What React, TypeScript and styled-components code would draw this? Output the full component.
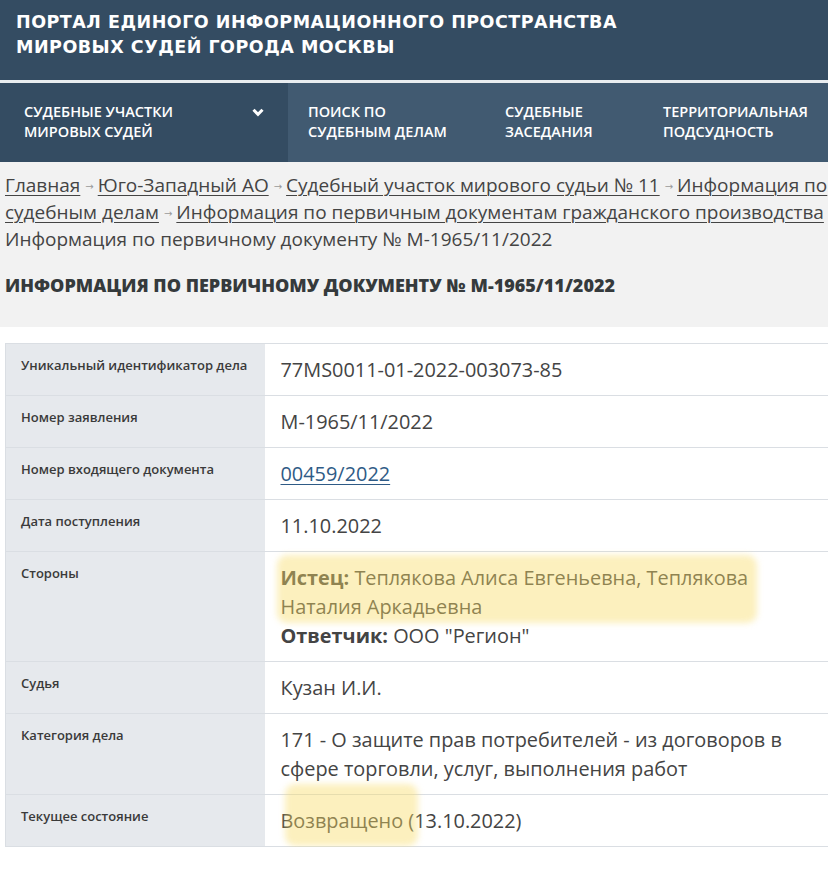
import React from "react";
import styled, { createGlobalStyle } from "styled-components";

const Global = createGlobalStyle`
  html, body { margin: 0; padding: 0; background: #fff; }
  body { overflow-x: hidden; font-family: "Open Sans", "Noto Sans", sans-serif; color: #333; }
`;

const Page = styled.div`
  width: 866px;
`;

const Header = styled.header`
  background: #344c62;
  height: 80px;
  padding: 10px 16px 0;
  box-sizing: border-box;
`;

const Title = styled.h1`
  margin: 0;
  font-family: "DejaVu Sans", sans-serif;
  font-weight: 700;
  font-size: 17.5px;
  line-height: 25px;
  letter-spacing: 0.5px;
  color: #fff;
  text-transform: uppercase;
`;

const Divider = styled.div`
  height: 3px;
  background: #e9edf0;
`;

const Nav = styled.nav`
  display: flex;
  height: 79px;
  background: #415a71;
`;

const NavItem = styled.div<{ $w: number; $active?: boolean; $pl: number }>`
  display: flex;
  align-items: center;
  justify-content: space-between;
  box-sizing: border-box;
  width: ${(p) => p.$w}px;
  flex: none;
  padding-left: ${(p) => p.$pl}px;
  padding-right: ${(p) => (p.$active ? 24 : 0)}px;
  padding-bottom: 2px;
  background: ${(p) => (p.$active ? "#344c62" : "transparent")};
  color: #fff;
  font-family: "Open Sans", sans-serif;
  font-weight: 600;
  font-size: 14.5px;
  line-height: 19.5px;
  text-transform: uppercase;
  white-space: nowrap;
`;

const Chevron = styled.svg`
  width: 12px;
  height: 9px;
  margin-top: -18px;
`;

const Crumbs = styled.section`
  background: #f2f2f2;
  padding: 10px 0 30px 5px;
`;

const Trail = styled.div`
  font-size: 19px;
  line-height: 27px;
  color: #444;
`;

const Crumb = styled.a`
  color: #444;
  text-decoration: underline;
  text-underline-offset: 3px;
  text-decoration-thickness: 1px;
`;

const Arrow = styled.span`
  display: inline-block;
  color: #9a9a9a;
  font-family: "DejaVu Sans", sans-serif;
  font-size: 10px;
  line-height: 1;
  margin: 0 4px 0 5px;
  vertical-align: 2px;
`;

const Heading = styled.h2`
  margin: 20px 0 0;
  font-size: 18px;
  line-height: 24px;
  font-weight: 800;
  color: #353a3c;
  text-transform: uppercase;
`;

const Content = styled.section`
  padding: 16px 0 0 5px;
`;

const Table = styled.table`
  border-collapse: collapse;
  width: 861px;
  border-left: 1px solid #dadee3;
`;

const Row = styled.tr`
  border-top: 1px solid #dadee3;
  border-bottom: 1px solid #dadee3;
`;

const Label = styled.th`
  width: 259px;
  box-sizing: border-box;
  background: #e6e9ed;
  text-align: left;
  vertical-align: top;
  padding: 12px 14px 10px 15px;
  font-size: 13px;
  line-height: 18px;
  font-weight: 600;
  color: #3a3a3a;
  white-space: nowrap;
`;

const Value = styled.td`
  vertical-align: top;
  padding: 11px 16px 11px;
  font-size: 19.9px;
  line-height: 29px;
  color: #444;
`;

const Marked = styled.div`
  position: relative;
`;

const Highlight = styled.div`
  position: absolute;
  background: rgba(248, 220, 100, 0.42);
  filter: blur(3px);
  border-radius: 10px;
  pointer-events: none;
`;

const Strong = styled.b`
  font-weight: 700;
`;

const Link = styled.a`
  color: #2f5b86;
  text-decoration: underline;
  text-underline-offset: 3px;
  text-decoration-thickness: 1px;
`;

const crumbs = [
  "Главная",
  "Юго-Западный АО",
  "Судебный участок мирового судьи № 11",
  "Информация по судебным делам",
  "Информация по первичным документам гражданского производства",
];

export default function App() {
  return (
    <Page>
      <Global />
      <Header>
        <Title>
          Портал единого информационного пространства
          <br />
          мировых судей города Москвы
        </Title>
      </Header>
      <Divider />
      <Nav>
        <NavItem $w={288} $pl={24} $active>
          <span>
            Судебные участки
            <br />
            мировых судей
          </span>
          <Chevron viewBox="0 0 12 9">
            <path d="M1.5 1.8 L6 6.3 L10.5 1.8" fill="none" stroke="#fff" strokeWidth="3" />
          </Chevron>
        </NavItem>
        <NavItem $w={217} $pl={20}>
          <span>
            Поиск по
            <br />
            судебным делам
          </span>
        </NavItem>
        <NavItem $w={158} $pl={0}>
          <span>
            Судебные
            <br />
            заседания
          </span>
        </NavItem>
        <NavItem $w={173} $pl={0}>
          <span>
            Территориальная
            <br />
            подсудность
          </span>
        </NavItem>
      </Nav>
      <Crumbs>
        <Trail>
          {crumbs.map((c) => (
            <React.Fragment key={c}>
              <Crumb href="#">{c}</Crumb>
              <Arrow>→</Arrow>
            </React.Fragment>
          ))}
          Информация по первичному документу № М-1965/11/2022
        </Trail>
        <Heading>Информация по первичному документу № М-1965/11/2022</Heading>
      </Crumbs>
      <Content>
        <Table>
          <tbody>
            <Row>
              <Label>Уникальный идентификатор дела</Label>
              <Value>77MS0011-01-2022-003073-85</Value>
            </Row>
            <Row>
              <Label>Номер заявления</Label>
              <Value>М-1965/11/2022</Value>
            </Row>
            <Row>
              <Label>Номер входящего документа</Label>
              <Value>
                <Link href="#">00459/2022</Link>
              </Value>
            </Row>
            <Row>
              <Label>Дата поступления</Label>
              <Value>11.10.2022</Value>
            </Row>
            <Row>
              <Label>Стороны</Label>
              <Value>
                <Marked>
                  <Strong>Истец:</Strong> Теплякова Алиса Евгеньевна, Теплякова
                  <br />
                  Наталия Аркадьевна
                  <br />
                  <Strong>Ответчик:</Strong> ООО "Регион"
                  <Highlight style={{ left: -4, top: -8, width: 480, height: 68 }} />
                </Marked>
              </Value>
            </Row>
            <Row>
              <Label>Судья</Label>
              <Value>Кузан И.И.</Value>
            </Row>
            <Row>
              <Label>Категория дела</Label>
              <Value>
                171 - О защите прав потребителей - из договоров в
                <br />
                сфере торговли, услуг, выполнения работ
              </Value>
            </Row>
            <Row>
              <Label>Текущее состояние</Label>
              <Value>
                <Marked>
                  Возвращено (13.10.2022)
                  <Highlight style={{ left: 4, top: -22, width: 133, height: 62 }} />
                </Marked>
              </Value>
            </Row>
          </tbody>
        </Table>
      </Content>
    </Page>
  );
}
